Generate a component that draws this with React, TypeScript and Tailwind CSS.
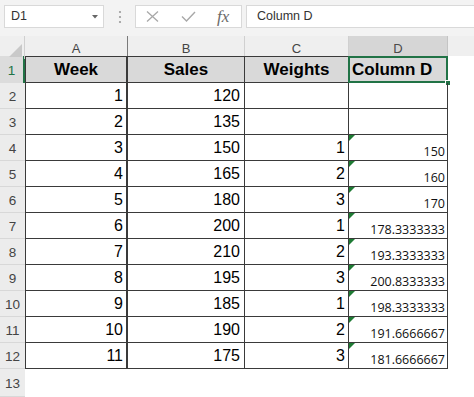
import React from 'react';

interface RowData {
    week: number;
    sales: number;
    weight?: number;
    colD?: string;
}

const rows: RowData[] = [
    { week: 1, sales: 120 },
    { week: 2, sales: 135 },
    { week: 3, sales: 150, weight: 1, colD: '150' },
    { week: 4, sales: 165, weight: 2, colD: '160' },
    { week: 5, sales: 180, weight: 3, colD: '170' },
    { week: 6, sales: 200, weight: 1, colD: '178.3333333' },
    { week: 7, sales: 210, weight: 2, colD: '193.3333333' },
    { week: 8, sales: 195, weight: 3, colD: '200.8333333' },
    { week: 9, sales: 185, weight: 1, colD: '198.3333333' },
    { week: 10, sales: 190, weight: 2, colD: '191.6666667' },
    { week: 11, sales: 175, weight: 3, colD: '181.6666667' },
];

const font = "font-['Liberation_Sans',Arial,sans-serif]";

function FormulaBar() {
    return (
        <div className="flex items-start h-[36px] bg-[#f3f3f3] pt-[5px] pl-[4px]">
            <div className="relative w-[100px] h-[23px] bg-white border border-[#d9d9d9] flex items-center pl-[6px] text-[12.5px] text-[#333]">
                D1
                <svg className="absolute right-[5px] top-[9px]" width="6" height="4" viewBox="0 0 6 4">
                    <polygon points="0,0 6,0 3,3.5" fill="#666" />
                </svg>
            </div>
            <div className="w-[31px] h-[23px] flex items-center justify-center">
                <svg width="4" height="14" viewBox="0 0 4 14">
                    <circle cx="2" cy="2" r="1.1" fill="#9a9a9a" />
                    <circle cx="2" cy="7" r="1.1" fill="#9a9a9a" />
                    <circle cx="2" cy="12" r="1.1" fill="#9a9a9a" />
                </svg>
            </div>
            <div className="w-[107px] h-[23px] bg-white border border-[#d9d9d9] flex items-center">
                <svg className="ml-[10px]" width="13" height="11" viewBox="0 0 13 11">
                    <path d="M1 0.5 L12 10.5 M12 0.5 L1 10.5" stroke="#a8a8a8" strokeWidth="1.3" />
                </svg>
                <svg className="ml-[22px]" width="15" height="11" viewBox="0 0 15 11">
                    <path d="M1 5.5 L5.5 10 L14 1" stroke="#a8a8a8" strokeWidth="1.4" fill="none" />
                </svg>
                <span className="ml-[21px] font-['Liberation_Serif',serif] italic text-[17px] text-[#6a6a6a] leading-none">fx</span>
            </div>
            <div className="ml-[4px] flex-1 h-[23px] bg-white border border-r-0 border-[#d9d9d9] flex items-center pl-[10px] text-[12.5px] text-[#333]">
                Column D
            </div>
        </div>
    );
}

function ColumnHeaders() {
    return (
        <div className="grid grid-cols-[25px_103px_117px_104px_99px_1fr] h-[20px] bg-[#efefef] text-[13px] text-[#444]">
            <div className="relative border-r border-[#d0d0d0]">
                <svg className="absolute right-[2px] bottom-[2px]" width="13" height="13" viewBox="0 0 13 13">
                    <polygon points="13,0 13,13 0,13" fill="#c9c9c9" />
                </svg>
            </div>
            <div className="flex items-center justify-center pt-[3px] border-r border-[#7a7a7a]">A</div>
            <div className="flex items-center justify-center pt-[3px] border-r border-[#d0d0d0]">B</div>
            <div className="flex items-center justify-center pt-[3px] border-r border-[#d0d0d0]">C</div>
            <div className="flex items-center justify-center pt-[3px] bg-[#d6d6d6] border-r border-[#c4c4c4] text-[#4a4a4a]">D</div>
            <div />
        </div>
    );
}

function ErrorMark() {
    return (
        <svg className="absolute left-0 top-0" width="6" height="6" viewBox="0 0 6 6">
            <polygon points="0,0 6,0 0,6" fill="#1e7b34" />
        </svg>
    );
}

export default function App() {
    return (
        <div className={`w-[474px] h-[397px] overflow-hidden bg-white ${font}`}>
            <FormulaBar />
            <ColumnHeaders />

            <div className="grid grid-cols-[25px_103px_117px_104px_99px_1fr]">
                {/* row 1: headers of the table */}
                <div className="h-[27px] bg-[#dcdcdc] border-r-2 border-[#217346] flex items-center justify-center pt-[3px] text-[13.5px] text-[#217346]">
                    1
                </div>
                <div className="h-[27px] bg-[#d9d9d9] border-y border-l border-r-2 border-[#3a3a3a] flex items-center justify-center text-[17px] font-bold text-black">
                    Week
                </div>
                <div className="h-[27px] bg-[#d9d9d9] border-y border-r border-[#3a3a3a] flex items-center justify-center text-[17px] font-bold text-black">
                    Sales
                </div>
                <div className="h-[27px] bg-[#d9d9d9] border-y border-r border-[#3a3a3a] flex items-center justify-center text-[17px] font-bold text-black">
                    Weights
                </div>
                <div className="relative h-[27px] bg-[#d9d9d9] border-y border-r border-[#3a3a3a] flex items-center pl-[3px] pt-[1px] text-[17px] font-bold text-black whitespace-nowrap">
                    Column D
                    <div className="absolute -inset-[1px] border-2 border-[#217346]" />
                    <div className="absolute -right-[4px] -bottom-[4px] w-[6px] h-[6px] bg-[#217346] border border-white" />
                </div>
                <div />

                {rows.map((r, i) => (
                    <React.Fragment key={r.week}>
                        <div className="h-[26px] bg-[#ececec] border-b border-[#d8d8d8] flex items-center justify-center pt-[3px] text-[13.5px] text-[#444]">
                            {i + 2}
                        </div>
                        <div className="h-[26px] border-b border-l border-r-2 border-[#3a3a3a] flex items-center justify-end pr-[3px] pt-[1px] text-[16px] text-black">
                            {r.week}
                        </div>
                        <div className="h-[26px] border-b border-r border-[#3a3a3a] flex items-center justify-end pr-[4px] pt-[1px] text-[16px] text-black">
                            {r.sales}
                        </div>
                        <div className="h-[26px] border-b border-r border-[#3a3a3a] flex items-center justify-end pr-[3px] pt-[1px] text-[16px] text-black">
                            {r.weight ?? ''}
                        </div>
                        <div className="relative h-[26px] border-b border-r border-[#3a3a3a] flex items-end justify-end pr-[2px] pb-[2px] font-['Open_Sans',sans-serif] text-[12.5px] leading-none text-[#111]">
                            {r.colD && <ErrorMark />}
                            {r.colD ?? ''}
                        </div>
                        <div />
                    </React.Fragment>
                ))}

                <div className="h-[28px] bg-[#ececec] border-b border-[#d8d8d8] flex items-center justify-center pt-[3px] text-[13.5px] text-[#444]">
                    13
                </div>
                <div />
                <div />
                <div />
                <div />
                <div />
            </div>
        </div>
    );
}
